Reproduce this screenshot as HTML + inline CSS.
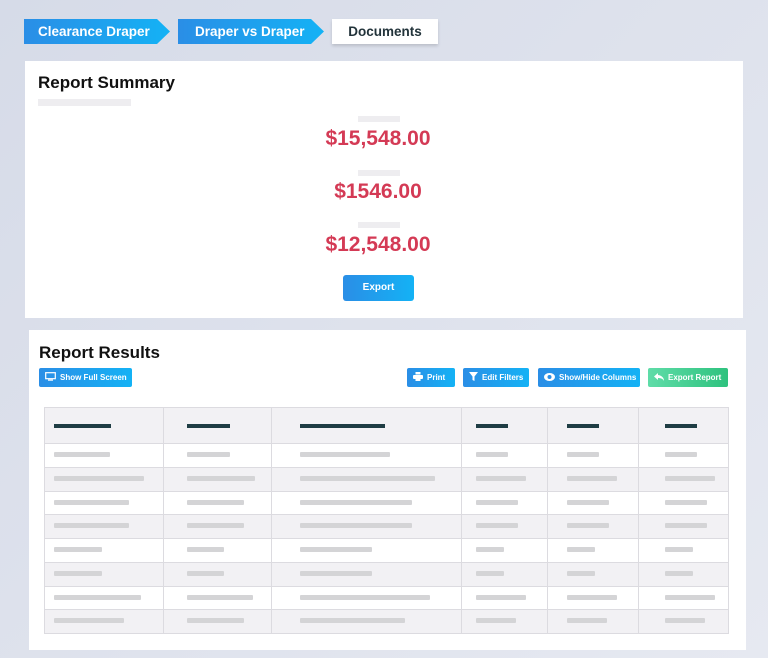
<!DOCTYPE html>
<html><head><style>
*{margin:0;padding:0;box-sizing:border-box}
body{width:768px;height:658px;background:linear-gradient(135deg,#d6dbe8,#e6e9f1);font-family:"Liberation Sans",sans-serif;position:relative;overflow:hidden}
.a{position:absolute}
.crumb{position:absolute;top:19px;height:25px;color:#fff;font-weight:bold;font-size:13.5px;line-height:25px;background:linear-gradient(90deg,#2a8ee6,#14b2f5);clip-path:polygon(0 0,calc(100% - 13px) 0,100% 50%,calc(100% - 13px) 100%,0 100%);box-shadow:0 2px 3px rgba(0,0,0,.2)}
.panel{position:absolute;background:#fff}
.bar{position:absolute;height:5px;background:#d4d4d6;border-radius:1px}
.hb{position:absolute;height:4px;background:#1f3d44}
.amt{position:absolute;left:19px;width:718px;text-align:center;color:#d43a55;font-weight:bold;font-size:21px}
.btn{position:absolute;top:368px;height:19px;border-radius:2px;color:#fff;font-size:8px;font-weight:bold;line-height:19px;background:linear-gradient(90deg,#2a8ee6,#14b2f5);padding-left:6px;white-space:nowrap}
.btn svg{vertical-align:middle;margin-right:4px;position:relative;top:-1px}
</style></head><body>
<div class="crumb" style="left:24px;width:146px;padding-left:14px">Clearance Draper</div>
<div class="crumb" style="left:178px;width:146px;padding-left:17px">Draper vs Draper</div>
<div class="a" style="left:332px;top:19px;width:106px;height:25px;background:#fff;color:#22333a;font-weight:bold;font-size:13.5px;line-height:25px;text-align:center;box-shadow:0 2px 3px rgba(0,0,0,.15)">Documents</div>

<div class="panel" style="left:25px;top:61px;width:718px;height:257px"></div>
<div class="a" style="left:38px;top:73px;font-size:17px;font-weight:bold;color:#111">Report Summary</div>
<div class="a" style="left:38px;top:99px;width:93px;height:7px;background:#eeedf0"></div>
<div class="a" style="left:358px;top:116px;width:42px;height:6px;background:#eeedf0"></div>
<div class="amt" style="top:127px">$15,548.00</div>
<div class="a" style="left:358px;top:170px;width:42px;height:6px;background:#eeedf0"></div>
<div class="amt" style="top:180px">$1546.00</div>
<div class="a" style="left:358px;top:222px;width:42px;height:6px;background:#eeedf0"></div>
<div class="amt" style="top:233px">$12,548.00</div>
<div class="a" style="left:343px;top:275px;width:71px;height:26px;border-radius:3px;background:linear-gradient(90deg,#2a8ee6,#14b2f5);color:#fff;font-size:10px;font-weight:bold;text-align:center;line-height:26px">Export</div>

<div class="panel" style="left:29px;top:330px;width:717px;height:320px"></div>
<div class="a" style="left:39px;top:343px;font-size:17px;font-weight:bold;color:#111">Report Results</div>
<div class="btn" style="left:39px;width:93px"><svg width="11" height="9" viewBox="0 0 11 9"><rect x="0.7" y="0.7" width="9.6" height="6" fill="none" stroke="#fff" stroke-width="1.2"/><rect x="3" y="7.5" width="5" height="1.2" fill="#fff"/></svg>Show Full Screen</div>
<div class="btn" style="left:407px;width:48px"><svg width="10" height="9" viewBox="0 0 10 9"><rect x="2.5" y="0" width="5" height="2.5" fill="#fff"/><rect x="0" y="3" width="10" height="4" rx="1" fill="#fff"/><rect x="2.5" y="6" width="5" height="3" fill="#fff"/></svg>Print</div>
<div class="btn" style="left:463px;width:66px"><svg width="9" height="9" viewBox="0 0 9 9"><path d="M0 0H9L5.5 4.5V9L3.5 8V4.5Z" fill="#fff"/></svg>Edit Filters</div>
<div class="btn" style="left:538px;width:102px"><svg width="11" height="8" viewBox="0 0 11 8"><ellipse cx="5.5" cy="4" rx="5.5" ry="4" fill="#fff"/><circle cx="5.5" cy="4" r="2" fill="#2a8ee6"/></svg>Show/Hide Columns</div>
<div class="btn" style="left:648px;width:80px;background:linear-gradient(90deg,#5fdca8,#2ec27e)"><svg width="10" height="8" viewBox="0 0 10 8"><path d="M4 0L0 3.5L4 7V5C7 5 9 6 10 8C10 5 8 2.5 4 2Z" fill="#fff"/></svg>Export Report</div>

<div class="a" style="left:44px;top:407px;width:685px;height:227px;border:1px solid #dcdbe0;background:#fff"></div>
<div class="a" style="left:45px;top:408px;width:683px;height:35px;background:#f2f1f4"></div>
<div id="rows"></div>
<script>
var html='';
var cols=[44,163,271,461,547,638,728];
for(var i=0;i<8;i++){var y=443+i*23.75;
 html+='<div class="a" style="left:45px;top:'+y+'px;width:683px;height:23.75px;border-top:1px solid #dcdbe0;background:'+(i%2?'#f2f1f4':'#fff')+'"></div>';}
for(var c=1;c<6;c++)html+='<div class="a" style="left:'+cols[c]+'px;top:408px;width:1px;height:225px;background:#dcdbe0"></div>';
var hs=[[54,57],[187,43],[300,85],[476,32],[567,32],[665,32]];
hs.forEach(function(h){html+='<div class="hb" style="left:'+h[0]+'px;top:424px;width:'+h[1]+'px"></div>'});
var w=[[56,90,75,75,48,48,87,70],[43,68,57,57,37,37,66,57],[90,135,112,112,72,72,130,105],[32,50,42,42,28,28,50,40],[32,50,42,42,28,28,50,40],[32,50,42,42,28,28,50,40]];
var xs=[54,187,300,476,567,665];
for(var c=0;c<6;c++)for(var i=0;i<8;i++){var y=443+i*23.75+9;html+='<div class="bar" style="left:'+xs[c]+'px;top:'+y+'px;width:'+w[c][i]+'px"></div>';}
document.getElementById('rows').innerHTML=html;
</script>
</body></html>
